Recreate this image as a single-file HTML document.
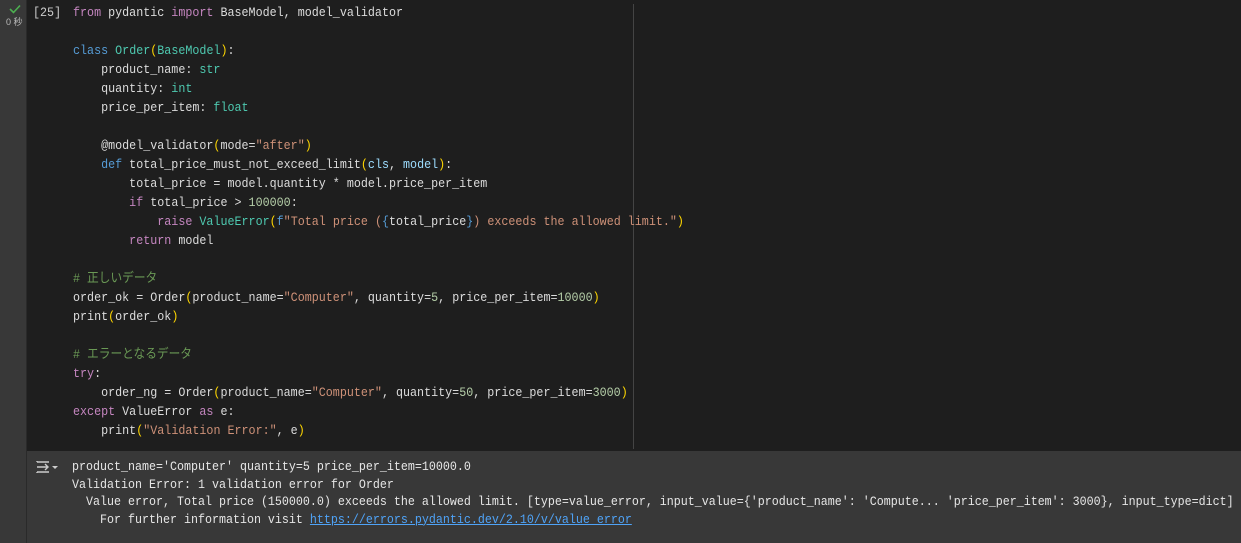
<!DOCTYPE html>
<html><head><meta charset="utf-8"><style>
body{margin:0;width:1241px;height:543px;background:#383838;overflow:hidden;font-family:"Liberation Mono","Noto Sans CJK JP",monospace;font-size:13px;color:#dcdcdc}
.gut{position:absolute;left:0;top:0;width:26px;height:543px;background:#383838;border-right:1px solid #2a2a2a}
.code{position:absolute;left:27px;top:0;width:1214px;height:451px;background:#1e1e1e}
.ruler{position:absolute;left:633px;top:4px;width:1px;height:445px;background:#444}
pre{margin:0;font:inherit;white-space:pre;transform-origin:0 0}
.src{position:absolute;left:73px;top:3px;line-height:19px;transform:scaleX(.90)}
.out{position:absolute;left:72px;top:458px;line-height:17.5px;color:#e6e6e6;transform:scaleX(.897)}
.k{color:#c586c0}.b{color:#569cd6}.c{color:#4ec9b0}.s{color:#ce9178}.n{color:#b5cea8}.m{color:#6a9955}.p{color:#ffd700}.v{color:#9cdcfe}
.num{position:absolute;left:33px;top:3px;line-height:19px;color:#ccc;transform:scaleX(.90)}
a{color:#4fa3f7;text-decoration:underline}
</style></head><body>
<div class="gut"></div>
<svg style="position:absolute;left:9px;top:4px" width="12" height="10"><path d="M1 5 L4.5 8.5 L11 1.5" stroke="#4caf50" stroke-width="1.6" fill="none"/></svg>
<div style="position:absolute;left:6px;top:15px;font-size:9px;color:#bbb;font-family:'Liberation Sans','Noto Sans CJK JP',sans-serif">0 秒</div>
<div class="code"></div>
<div class="ruler"></div>
<pre class="num">[25]</pre>
<pre class="src"><span class="k">from</span> pydantic <span class="k">import</span> BaseModel, model_validator

<span class="b">class</span> <span class="c">Order</span><span class="p">(</span><span class="c">BaseModel</span><span class="p">)</span>:
    product_name: <span class="c">str</span>
    quantity: <span class="c">int</span>
    price_per_item: <span class="c">float</span>

    @model_validator<span class="p">(</span>mode=<span class="s">"after"</span><span class="p">)</span>
    <span class="b">def</span> total_price_must_not_exceed_limit<span class="p">(</span><span class="v">cls</span>, <span class="v">model</span><span class="p">)</span>:
        total_price = model.quantity * model.price_per_item
        <span class="k">if</span> total_price &gt; <span class="n">100000</span>:
            <span class="k">raise</span> <span class="c">ValueError</span><span class="p">(</span><span class="b">f</span><span class="s">"Total price (</span><span class="b">{</span>total_price<span class="b">}</span><span class="s">) exceeds the allowed limit."</span><span class="p">)</span>
        <span class="k">return</span> model

<span class="m"># 正しいデータ</span>
order_ok = Order<span class="p">(</span>product_name=<span class="s">"Computer"</span>, quantity=<span class="n">5</span>, price_per_item=<span class="n">10000</span><span class="p">)</span>
print<span class="p">(</span>order_ok<span class="p">)</span>

<span class="m"># エラーとなるデータ</span>
<span class="k">try</span>:
    order_ng = Order<span class="p">(</span>product_name=<span class="s">"Computer"</span>, quantity=<span class="n">50</span>, price_per_item=<span class="n">3000</span><span class="p">)</span>
<span class="k">except</span> ValueError <span class="k">as</span> e:
    print<span class="p">(</span><span class="s">"Validation Error:"</span>, e<span class="p">)</span></pre>
<svg style="position:absolute;left:36px;top:460px" width="24" height="16"><path d="M1 2H13M1 7H12M9 4l3 3-3 3M1 12H13M1 1v1M1 12v1" stroke="#ccc" stroke-width="1.4" fill="none"/><path d="M16 6h6l-3 3z" fill="#ccc"/></svg>
<pre class="out">product_name='Computer' quantity=5 price_per_item=10000.0
Validation Error: 1 validation error for Order
  Value error, Total price (150000.0) exceeds the allowed limit. [type=value_error, input_value={'product_name': 'Compute... 'price_per_item': 3000}, input_type=dict]
    For further information visit <a>https://errors.pydantic.dev/2.10/v/value_error</a></pre>
</body></html>
